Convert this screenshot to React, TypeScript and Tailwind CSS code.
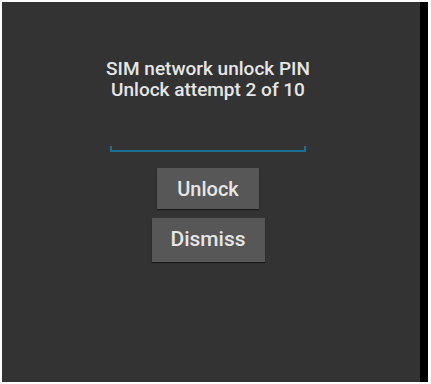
export default function App() {
  return (
    <div className="h-[384px] w-[431px] bg-white pt-[2px] pr-[3px] pb-[2px] pl-[2px]">
      <div className="flex h-full">
        <div
          className="flex flex-1 flex-col items-center bg-[#333333] pr-[6px] pt-[56px] text-[#e6e6e6]"
          style={{ fontFamily: "Roboto, 'Liberation Sans', sans-serif" }}
        >
          <p className="text-[19px] font-medium leading-[21px]">SIM network unlock PIN</p>
          <p className="text-[19px] font-medium leading-[21px]">Unlock attempt 2 of 10</p>
          <div className="mt-[46px] h-[6px] w-[196px] border-x-[2px] border-b-[2px] border-[#1d6f96]" />
          <button className="mt-[16px] h-[41px] w-[102px] bg-[#575757] text-[20px] font-medium shadow-[0_1px_1px_rgba(0,0,0,0.5)]">
            Unlock
          </button>
          <button className="mt-[9px] h-[44px] w-[113px] bg-[#575757] text-[21px] font-medium shadow-[0_1px_1px_rgba(0,0,0,0.5)]">
            Dismiss
          </button>
        </div>
        <div className="w-[8px] bg-black" />
      </div>
    </div>
  );
}
